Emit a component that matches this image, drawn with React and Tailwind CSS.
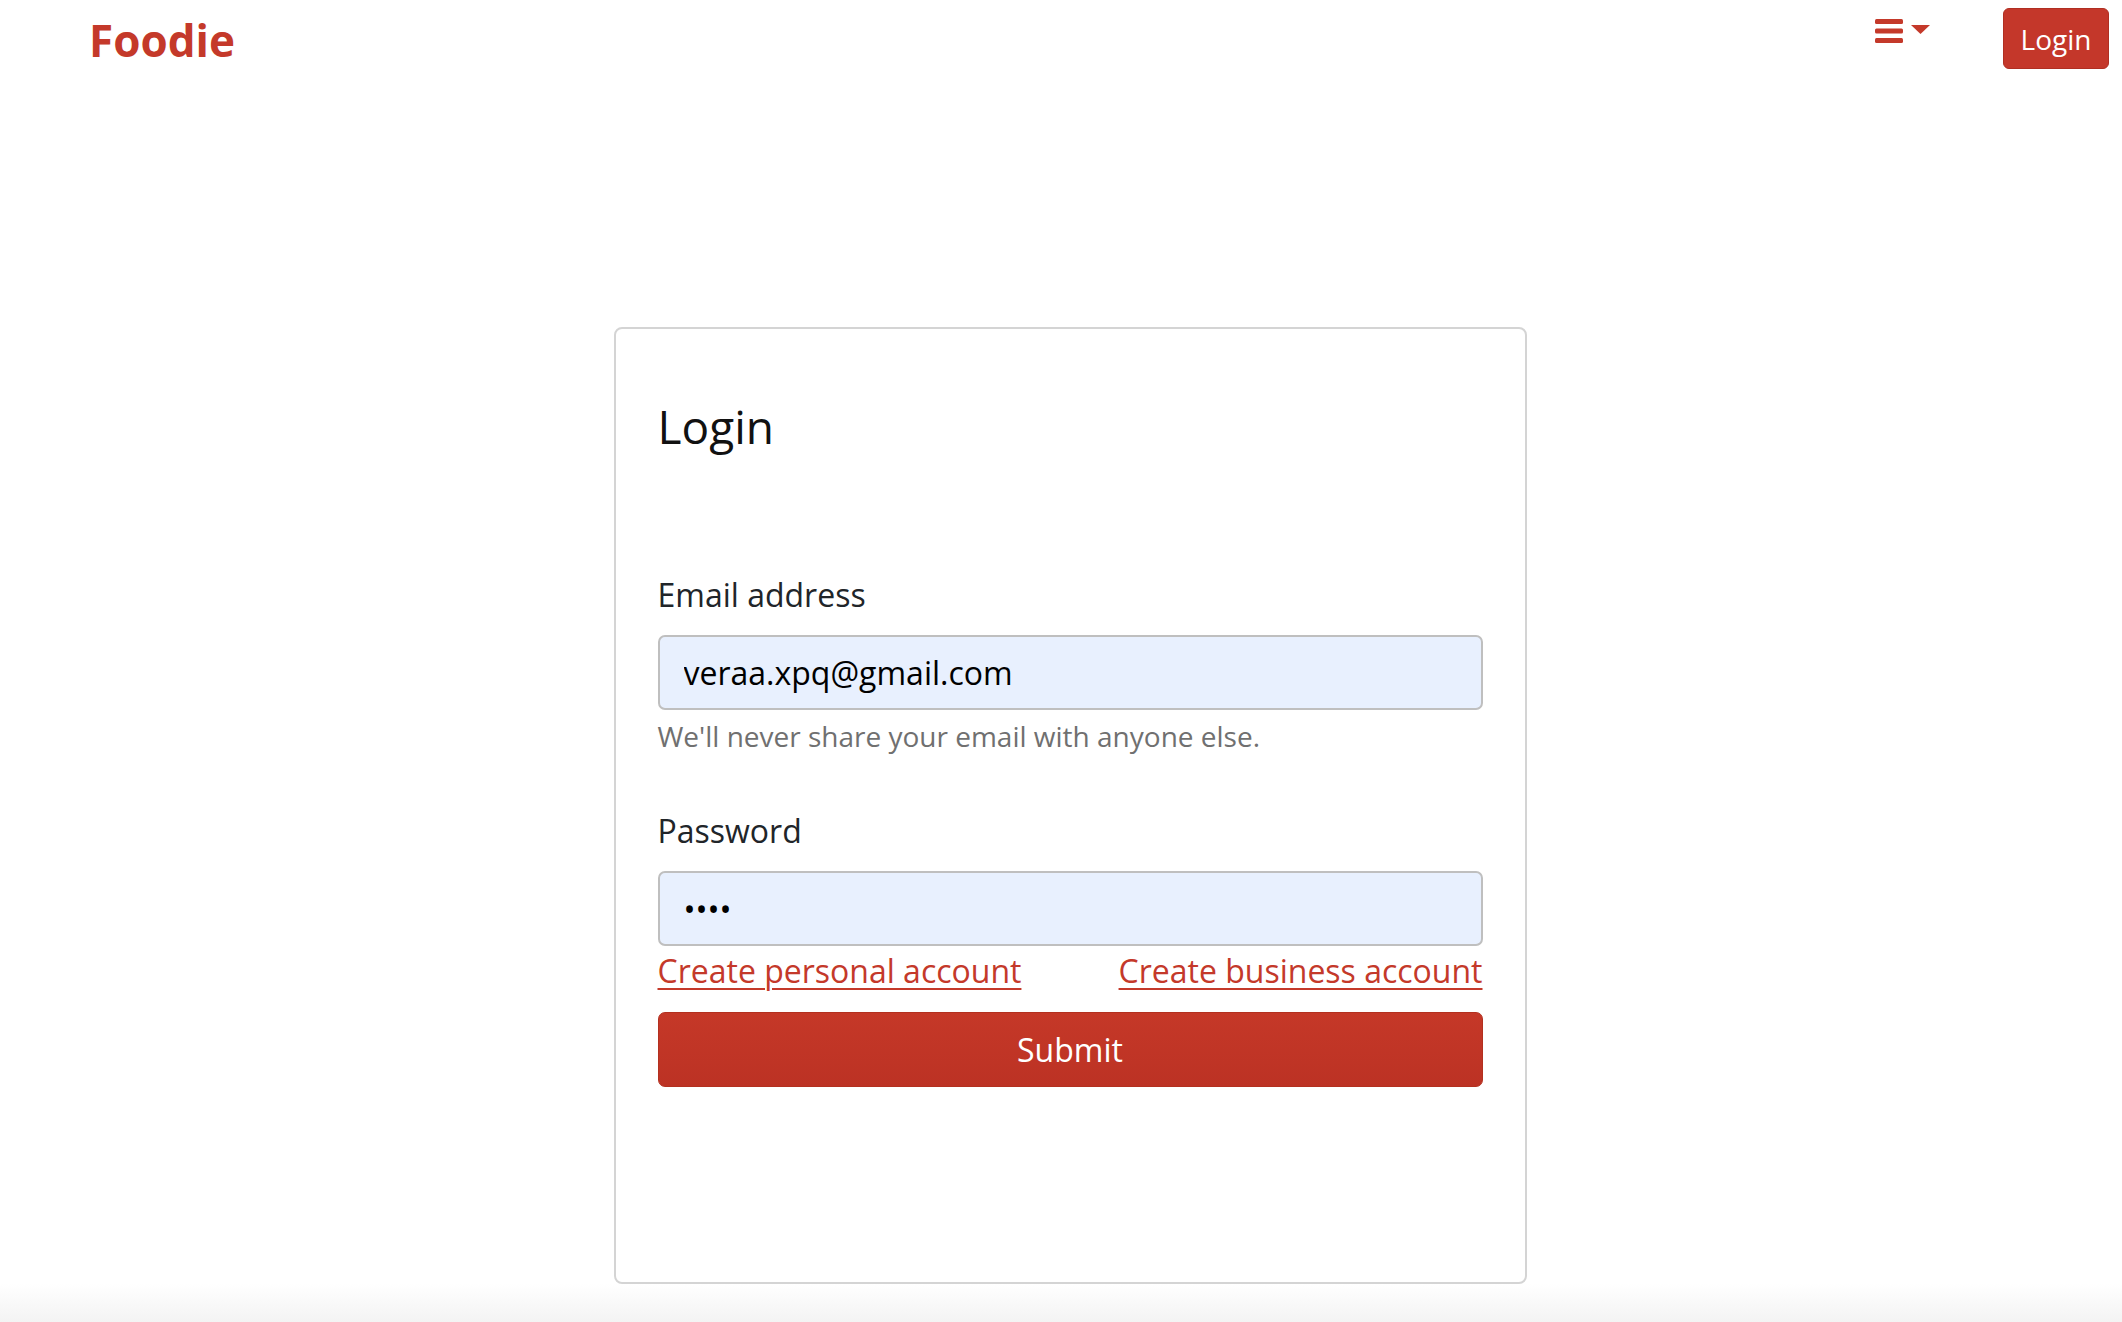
import React from 'react'

const red = 'text-[#c4392a]'

const Burger = () => (
	<svg width="56" height="26" viewBox="0 0 56 26" className="block">
		<rect x="0" y="1" width="28" height="5" rx="1.5" fill="#c4392a" />
		<rect x="0" y="10.5" width="28" height="5" rx="1.5" fill="#c4392a" />
		<rect x="0" y="20" width="28" height="5" rx="1.5" fill="#c4392a" />
		<polygon points="36,7 55,7 45.5,16" fill="#c4392a" />
	</svg>
)

const Field = ({label, type, value, help}) => (
	<div>
		<label className="block text-[32px] leading-[48px] text-[#212529]">{label}</label>
		<input
			type={type}
			defaultValue={value}
			className="mt-[16px] block w-full h-[75px] px-[24px] rounded-[7px] border-2 border-[#bfbfbf] bg-[#e8f0fe] text-[32px] leading-[48px] text-black outline-none"
		/>
		{help && (
			<p className="mt-[5px] text-[28px] leading-[42px] text-[#707070]">{help}</p>
		)}
	</div>
)

export default function App() {
	return (
		<div className="min-h-[1322px] flex flex-col bg-white font-['Open_Sans',sans-serif]">
			<header className="flex items-start justify-between pl-[89px] pr-[13px]">
				<a href="#" className={`mt-[10px] text-[44px] leading-[60px] font-bold ${red}`}>Foodie</a>
				<div className="flex items-start">
					<button className="mt-[18px] mr-[72px]">
						<Burger />
					</button>
					<button className="mt-[8px] w-[106px] h-[61px] rounded-[6px] border border-[#b02f22] bg-[#c4372a] text-[28px] leading-[42px] text-white">
						Login
					</button>
				</div>
			</header>

			<main className="flex-1 flex justify-center pl-[18px] pt-[257px]">
				<div className="w-[913px] h-[957px] rounded-[8px] border-2 border-[#d4d4d4] px-[42px] pt-[69px]">
					<h4 className="text-[46px] leading-[56px] text-[#111]">Login</h4>

					<form className="mt-[117px]" onSubmit={e => e.preventDefault()}>
						<Field label="Email address" type="email" value="veraa.xpq@gmail.com" help="We'll never share your email with anyone else." />
						<div className="mt-[50px]">
							<Field label="Password" type="password" value="abcd" />
						</div>
						<div className="mt-px flex justify-between text-[32px] leading-[48px]">
							<a href="#" className={`underline underline-offset-[5px] decoration-2 ${red}`}>Create personal account</a>
							<a href="#" className={`underline underline-offset-[5px] decoration-2 ${red}`}>Create business account</a>
						</div>
						<button className="mt-[17px] w-full h-[75px] rounded-[7px] border border-[#b3301f] bg-gradient-to-b from-[#c53828] to-[#bc3224] text-[32px] leading-[48px] text-white">
							Submit
						</button>
					</form>
				</div>
			</main>

			<div className="h-[39px] bg-gradient-to-b from-white to-[#f3f3f3]" />
		</div>
	)
}
